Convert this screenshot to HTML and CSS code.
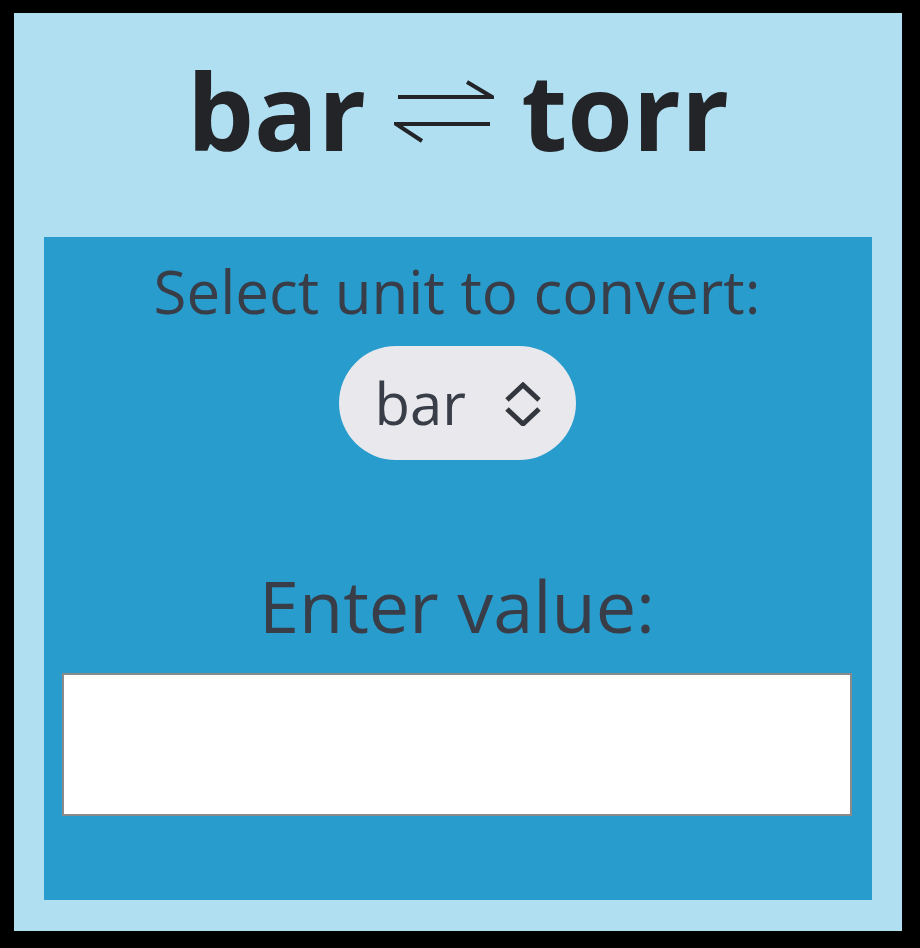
FILE: index.html
```html
<html lang="en">
<head>
    <meta charset="UTF-8">
    <meta name="viewport" content="width=device-width,initial-scale=1">
    <title>bar to torr converter</title>
    <link rel="stylesheet" href="styles.css">
</head>
<body>
<div class="card">
    <!-- Title -->
    <h1>bar <svg class="swap" viewBox="0 0 100 70" aria-hidden="true"><path d="M4 19H98L73 4M96 46H2L28 63"/></svg> torr</h1>

    <!-- Converter -->
    <main class="panel">
        <label for="unit">Select unit to convert:</label>
        <div class="select-wrap">
            <select id="unit">
                <option value="bar">bar</option>
                <option value="torr">torr</option>
            </select>
            <svg class="chevron" viewBox="0 0 40 44" aria-hidden="true"><path d="M4 18L20 3L36 18M4 27L20 42L36 27"/></svg>
        </div>

        <label for="value" class="big">Enter value:</label>
        <input id="value" type="number" aria-label="Value to convert">
    </main>
</div>
</body>
</html>
```

FILE: styles.css
```css
:root{
    --c-frame:#000;
    --c-light:#b0dff2;
    --c-blue:#289ccc;
    --c-text:#383d48;
    --c-title:#222428;
    --c-pill:#e9e9ed;
}
*{box-sizing:border-box;margin:0;padding:0}
body{background:var(--c-frame);padding:13px 18px 17px 14px;font-family:"Open Sans","Noto Sans",sans-serif;color:var(--c-text)}
.card{background:var(--c-light);padding:25px 30px 31px}
h1{font-size:106px;line-height:144px;font-weight:700;color:var(--c-title);text-align:center;margin-bottom:55px;white-space:nowrap}
.swap{width:100px;height:70px;vertical-align:3px;fill:none;stroke:var(--c-title);stroke-width:4}
.panel{background:var(--c-blue);padding:14px 20px 84px 18px;display:flex;flex-direction:column;align-items:center}
label{font-size:60px;line-height:80px;color:var(--c-text);white-space:nowrap}
label.big{font-size:72px;line-height:96px;margin-top:97px}
.select-wrap{position:relative;margin-top:15px}
select{
    appearance:none;-webkit-appearance:none;font:inherit;font-size:58px;line-height:78px;color:var(--c-text);
    background:var(--c-pill);border:none;border-radius:57px;width:237px;height:114px;padding:0 0 0 36px;outline:none;cursor:pointer;
}
.chevron{position:absolute;right:33px;top:36px;width:40px;height:44px;fill:none;stroke:#33363d;stroke-width:5;pointer-events:none}
input[type=number]{
    width:100%;height:143px;margin-top:20px;background:#fff;border:2px solid #8a8a8a;
    font:inherit;font-size:48px;padding:0 16px;color:var(--c-text);
}
input[type=number]:focus{outline:none}
```
